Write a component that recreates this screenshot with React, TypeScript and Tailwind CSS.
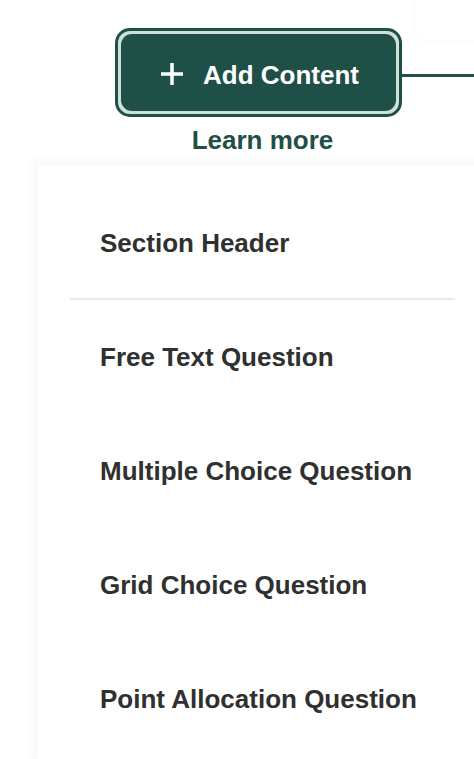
const ITEMS = [
  "Free Text Question",
  "Multiple Choice Question",
  "Grid Choice Question",
  "Point Allocation Question",
];

export default function App() {
  return (
    <div
      className="relative h-[759px] w-[474px] overflow-hidden bg-white"
      style={{ fontFamily: '"Liberation Sans", Arial, sans-serif' }}
    >
      {/* faint card peeking in top right */}
      <div className="absolute right-[-20px] top-[-20px] h-[60px] w-[78px] rounded-xl bg-white shadow-[0_0_10px_rgba(0,0,0,0.035)]" />

      {/* Add content button + connector */}
      <div className="flex flex-col pt-[28px]">
        <div className="flex items-center">
          <div className="ml-[115px] rounded-[15px] border-[3px] border-[#1f5048] bg-[#cfe0d8] p-[3px]">
            <button className="flex h-[77px] w-[275px] items-center gap-[19px] rounded-[11px] bg-[#1f5048] pl-[39px] pt-[5px] text-[26px] font-bold text-white">
              <svg width="24" height="24" viewBox="0 0 24 24" className="-mt-[3px]">
                <path d="M12 1v22M1 12h22" stroke="currentColor" strokeWidth="3.5" />
              </svg>
              Add Content
            </button>
          </div>
          <div className="mt-[6px] h-[3px] flex-1 bg-[#1f5048]" />
        </div>
        <a className="ml-[119px] mt-[4px] w-[287px] text-center text-[26px] font-bold text-[#1f5048]">
          Learn more
        </a>
      </div>

      {/* dropdown menu */}
      <div className="absolute left-[38px] top-[165px] h-[600px] w-[460px] bg-white shadow-[-4px_-4px_12px_rgba(0,0,0,0.04)]">
        <div className="flex flex-col">
          <div className="h-[133px] pl-[62px] pt-[63px] text-[26px] font-bold leading-[30px] text-[#2f3030]">
            Section Header
          </div>
          <div className="ml-[32px] mr-[43px] h-[2px] bg-[#e8e8e8]" />
          {ITEMS.map((label) => (
            <div
              key={label}
              className="flex h-[114px] items-center pl-[62px] text-[26px] font-bold text-[#2f3030]"
            >
              {label}
            </div>
          ))}
        </div>
      </div>
    </div>
  );
}
